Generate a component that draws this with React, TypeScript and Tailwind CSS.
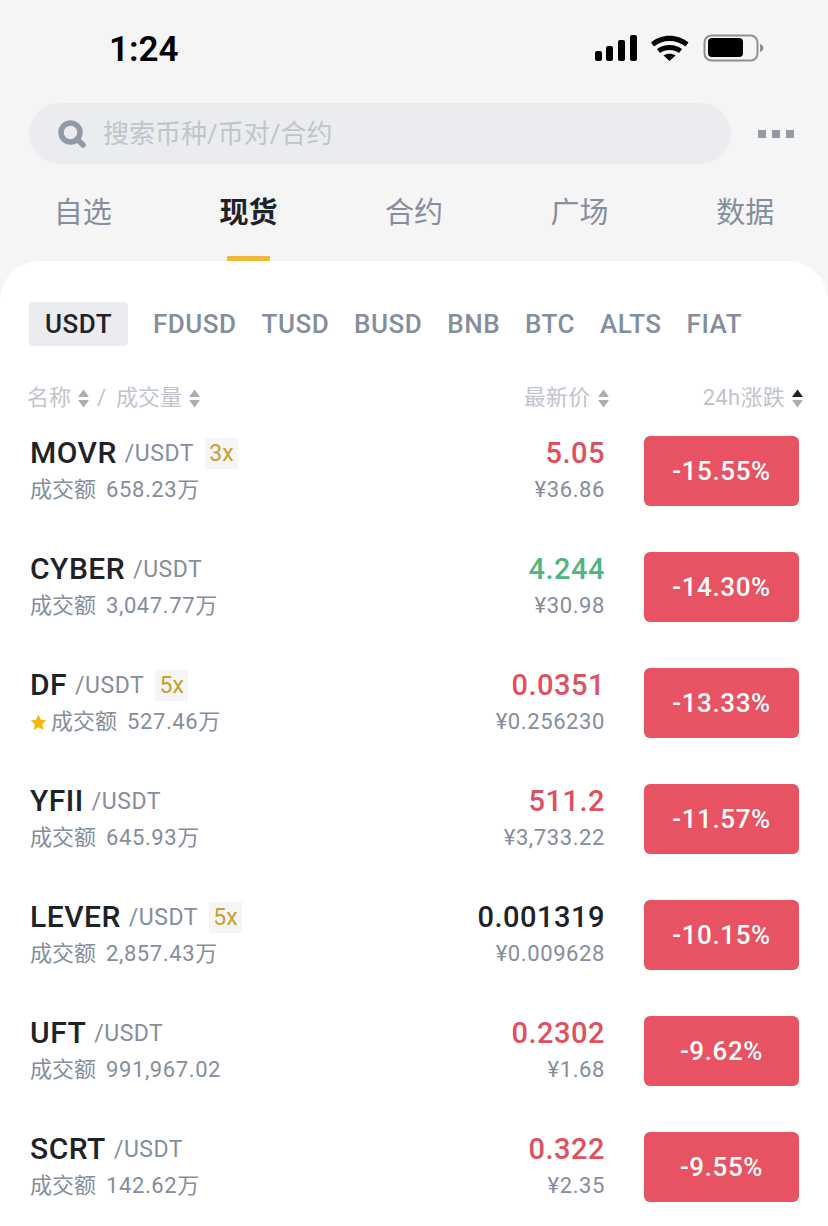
const FONT = "font-['Roboto','Noto_Sans_CJK_SC',sans-serif]";

interface Ticker {
  base: string;
  lev?: string;
  star?: boolean;
  volume: string;
  price: string;
  priceColor: string;
  fiat: string;
  change: string;
}

const TICKERS: Ticker[] = [
  { base: "MOVR", lev: "3x", volume: "658.23万", price: "5.05", priceColor: "text-[#e0505f]", fiat: "¥36.86", change: "-15.55%" },
  { base: "CYBER", volume: "3,047.77万", price: "4.244", priceColor: "text-[#52b482]", fiat: "¥30.98", change: "-14.30%" },
  { base: "DF", lev: "5x", star: true, volume: "527.46万", price: "0.0351", priceColor: "text-[#e0505f]", fiat: "¥0.256230", change: "-13.33%" },
  { base: "YFII", volume: "645.93万", price: "511.2", priceColor: "text-[#e0505f]", fiat: "¥3,733.22", change: "-11.57%" },
  { base: "LEVER", lev: "5x", volume: "2,857.43万", price: "0.001319", priceColor: "text-[#1e2329]", fiat: "¥0.009628", change: "-10.15%" },
  { base: "UFT", volume: "991,967.02", price: "0.2302", priceColor: "text-[#e0505f]", fiat: "¥1.68", change: "-9.62%" },
  { base: "SCRT", volume: "142.62万", price: "0.322", priceColor: "text-[#e0505f]", fiat: "¥2.35", change: "-9.55%" },
];

const TABS = ["自选", "现货", "合约", "广场", "数据"];
const QUOTES = ["USDT", "FDUSD", "TUSD", "BUSD", "BNB", "BTC", "ALTS", "FIAT"];

function StatusIcons() {
  return (
    <svg width="172" height="30" viewBox="0 0 172 30" className="block">
      {/* signal */}
      <rect x="1" y="17" width="7" height="10" rx="2" fill="#000" />
      <rect x="12" y="12" width="7" height="15" rx="2" fill="#000" />
      <rect x="24" y="6" width="7" height="21" rx="2" fill="#000" />
      <rect x="36" y="1" width="7" height="26" rx="2" fill="#000" />
      {/* wifi */}
      <path d="M57 8.5C67 -0.5 84 -0.5 94.5 8.5L91.5 12.5C83 5 68 5 60 12.5Z" fill="#000" />
      <path d="M63 15C70 9.5 81 9.5 88 15L85 19C80 15 71 15 66 19Z" fill="#000" />
      <path d="M69.5 21.5C73 19 78 19 81.5 21.5L75.5 27Z" fill="#000" />
      {/* battery */}
      <rect x="110.5" y="1.5" width="53" height="25" rx="7" fill="none" stroke="#8f8f8f" strokeWidth="2" />
      <rect x="114" y="4" width="35" height="19" rx="4" fill="#000" />
      <path d="M166 10C168.5 11 169.5 12.5 169.5 14C169.5 15.5 168.5 17 166 18Z" fill="#8f8f8f" />
    </svg>
  );
}

function SortIcon({ active }: { active?: boolean }) {
  return (
    <svg width="11" height="19" viewBox="0 0 11 19" className="block shrink-0">
      <path d="M5.5 0.5L11 8H0Z" fill={active ? "#1e2329" : "#a9aeb7"} />
      <path d="M5.5 18.5L11 11H0Z" fill="#a9aeb7" />
    </svg>
  );
}

function SearchBar() {
  return (
    <div className="flex items-center">
      <div className="ml-[29px] flex h-[61px] w-[702px] items-center rounded-full bg-[#eaecef] pl-[29px]">
        <svg width="28" height="28" viewBox="0 0 28 28" className="block shrink-0">
          <circle cx="12.5" cy="12.5" r="9.5" fill="none" stroke="#929aa5" strokeWidth="5.5" />
          <path d="M19 19L25 25" stroke="#929aa5" strokeWidth="5.5" strokeLinecap="round" />
        </svg>
        <span className="ml-[17px] text-[26px] leading-none text-[#c0c4cb]">搜索币种/币对/合约</span>
      </div>
      <div className="ml-[27px] flex gap-[6px]">
        <span className="h-2 w-2 bg-[#929aa5]" />
        <span className="h-2 w-2 bg-[#929aa5]" />
        <span className="h-2 w-2 bg-[#929aa5]" />
      </div>
    </div>
  );
}

function TopTabs() {
  return (
    <div className="mt-[27px] grid grid-cols-5">
      {TABS.map((tab, i) => (
        <div key={tab} className="flex h-[70px] flex-col items-center">
          <span className={`h-[45px] text-[29px] leading-[45px] ${i === 1 ? "font-bold text-[#1e2329]" : "text-[#848e9c]"}`}>
            {tab}
          </span>
          {i === 1 && <span className="mt-[20px] h-[5px] w-[43px] bg-[#ecb93a]" />}
        </div>
      ))}
    </div>
  );
}

function QuoteChips() {
  return (
    <div className="relative ml-[29px] mt-[40px] w-[771px] overflow-hidden">
      <div className="flex h-[44px] items-center gap-[25px] whitespace-nowrap text-[26px] tracking-[0.5px] text-[#848e9c]">
        {QUOTES.map((q, i) => (
          <span
            key={q}
            className={
              i === 0
                ? "flex h-[44px] w-[99px] shrink-0 items-center justify-center rounded-[4px] bg-[#eaecef] font-medium text-[#1e2329]"
                : "shrink-0 font-medium"
            }
          >
            {q}
          </span>
        ))}
      </div>
      <div className="absolute right-0 top-0 h-full w-[14px] bg-gradient-to-r from-transparent to-white" />
    </div>
  );
}

function ListHeader() {
  return (
    <div className="mt-[37px] flex h-[30px] items-center pl-[27px] pr-[25px] text-[22px] leading-none text-[#c0c4cb]">
      <span>名称</span>
      <span className="ml-[7px]"><SortIcon /></span>
      <span className="ml-[8px]">/</span>
      <span className="ml-[10px]">成交量</span>
      <span className="ml-[7px]"><SortIcon /></span>
      <span className="ml-auto tracking-[0.3px]">最新价</span>
      <span className="ml-[7px]"><SortIcon /></span>
      <span className="ml-[94px] tracking-[0.3px]">24h涨跌</span>
      <span className="ml-[7px]"><SortIcon active /></span>
    </div>
  );
}

function TickerRow({ t }: { t: Ticker }) {
  return (
    <div className="flex h-[116px] items-center pl-[30px] pr-[29px]">
      <div className="flex-1">
        <div className="flex h-[32px] items-center">
          <span className="text-[30px] font-medium leading-none tracking-[0.5px] text-[#1e2329]">{t.base}</span>
          <span className="ml-[8px] text-[23px] leading-none tracking-[0.5px] text-[#848e9c]">/USDT</span>
          {t.lev && (
            <span className="ml-[11px] flex h-[31px] w-[33px] items-center justify-center bg-[#f5f5f5] text-[23px] leading-none text-[#c99f2f]">
              {t.lev}
            </span>
          )}
        </div>
        <div className="mt-[6px] flex h-[30px] items-center text-[22px] leading-none text-[#848e9c]">
          {t.star && (
            <svg width="17" height="17" viewBox="0 0 24 24" className="mr-[4px] block shrink-0">
              <path d="M12 1l3.4 7.2 7.6 1-5.6 5.4 1.5 7.9L12 18.6l-6.9 3.9 1.5-7.9L1 9.2l7.6-1z" fill="#f0b90b" />
            </svg>
          )}
          <span>成交额</span>
          <span className="ml-[10px] tracking-[0.6px]">{t.volume}</span>
        </div>
      </div>
      <div className="mr-[39px] text-right">
        <div className={`h-[32px] text-[29px] font-medium leading-[32px] tracking-[0.5px] ${t.priceColor}`}>{t.price}</div>
        <div className="mt-[6px] h-[30px] text-[22px] leading-[30px] tracking-[0.6px] text-[#848e9c]">{t.fiat}</div>
      </div>
      <div className="flex h-[70px] w-[155px] shrink-0 items-center justify-center rounded-[6px] bg-[#e75363] text-[26px] font-medium tracking-[0.6px] text-white">
        {t.change}
      </div>
    </div>
  );
}

export default function App() {
  return (
    <div className={`h-[1226px] w-[828px] overflow-hidden bg-[#f5f5f5] ${FONT}`}>
      <div className="flex h-[103px] items-start justify-between pl-[109px] pr-[62px] pt-[29px]">
        <span className="text-[35px] font-semibold leading-[41px] text-black">1:24</span>
        <div className="pt-[5px]">
          <StatusIcons />
        </div>
      </div>
      <SearchBar />
      <TopTabs />
      <div className="-mt-[0px] h-[965px] rounded-t-[40px] bg-white pt-px">
        <QuoteChips />
        <ListHeader />
        {TICKERS.map((t) => (
          <TickerRow key={t.base} t={t} />
        ))}
      </div>
    </div>
  );
}
